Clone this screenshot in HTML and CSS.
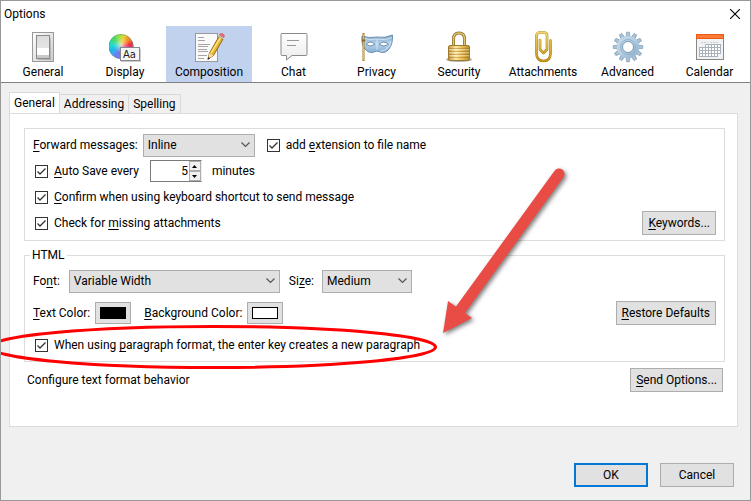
FILE: index.html
```html
<!DOCTYPE html>
<html lang="en">
<head>
    <meta charset="UTF-8">
    <meta name="viewport" content="width=device-width, initial-scale=1.0">
    <title>Options</title>
    <link rel="stylesheet" href="styles.css">
</head>
<body>
<div class="window">
    <header class="titlebar">
        <h1>Options</h1>
        <button class="close" aria-label="Close">
            <svg width="10" height="10" viewBox="0 0 10 10"><path d="M0 0L10 10M10 0L0 10" stroke="#000" stroke-width="1.1"/></svg>
        </button>
    </header>

    <nav class="toolbar">
        <button class="tool">
            <svg width="32" height="32" viewBox="0 0 32 32">
                <defs>
                    <linearGradient id="plate" x2="1" y2="1"><stop offset="0" stop-color="#fff"/><stop offset="1" stop-color="#ccc"/></linearGradient>
                    <linearGradient id="rocker" x2="0" y2="1"><stop offset="0" stop-color="#dcdcdc"/><stop offset="1" stop-color="#ececec"/></linearGradient>
                </defs>
                <rect x="5.5" y="1.5" width="21" height="29" fill="url(#plate)" stroke="#999"/>
                <path d="M10 28h13V6l1 2v21H11z" fill="#777" opacity=".35"/>
                <rect x="9.5" y="4.5" width="13" height="23" fill="url(#rocker)" stroke="#8a8a8a"/>
                <path d="M10 17h12v7H10z" fill="#fff"/>
                <path d="M10 24h12v3H10z" fill="#c8c8c8"/>
            </svg>
            <span>General</span>
        </button>
        <button class="tool">
            <svg width="32" height="32" viewBox="0 0 32 32">
                <defs>
                    <clipPath id="disc"><circle cx="12" cy="15.5" r="12.5"/></clipPath>
                    <filter id="blend" x="-30%" y="-30%" width="160%" height="160%"><feGaussianBlur stdDeviation="1.8"/></filter>
                    <radialGradient id="shine"><stop offset="0" stop-color="#fff" stop-opacity=".5"/><stop offset="1" stop-color="#fff" stop-opacity="0"/></radialGradient>
                </defs>
                <g clip-path="url(#disc)">
                    <g filter="url(#blend)">
                        <path d="M12 15L12-8L34-4z" fill="#f2d034"/>
                        <path d="M12 15L24-5L40 8z" fill="#fb8a25"/>
                        <path d="M12 15L38 2L40 22z" fill="#ef2e37"/>
                        <path d="M12 15L40 18L28 40z" fill="#e5359f"/>
                        <path d="M12 15L28 40L6 40z" fill="#b34fdf"/>
                        <path d="M12 15L10 40L-12 30z" fill="#6a7cf2"/>
                        <path d="M12 15L-8 36L-12 12z" fill="#23b4ed"/>
                        <path d="M12 15L-12 20L-8 2z" fill="#1edbd0"/>
                        <path d="M12 15L-12 5L4-8z" fill="#45d96a"/>
                        <path d="M12 15L1-8L15-8z" fill="#a5df3c"/>
                    </g>
                    <circle cx="12" cy="14" r="8" fill="url(#shine)"/>
                </g>
                <circle cx="12" cy="15.5" r="12" fill="none" stroke="#4a9c8c" stroke-opacity=".5"/>
                <path d="M12 30.5h19.500V18" fill="none" stroke="#000" stroke-opacity=".2"/>
                <rect x="11.5" y="16.5" width="19" height="13" fill="#f6f6f6" stroke="#888"/>
                <text class="icon-text" x="14" y="27">Aa</text>
            </svg>
            <span>Display</span>
        </button>
        <button class="tool active">
            <svg width="32" height="32" viewBox="0 0 32 32">
                <rect x="2.5" y="2.5" width="22" height="28" fill="#fafafa" stroke="#999"/>
                <path d="M5 6.500h6M5 9.500h7M5 13.500h12M5 15.500h10M5 18.500h9M5 20.500h10M5 24.500h9M5 27.500h6" stroke="#a5a5a5"/>
                <path d="M15 28l1.500-6L26 5.500l4 2.500-9.500 16.500z" fill="#e8b52d" stroke="#94681c"/>
                <path d="M18 22L27.500 6.500" stroke="#ffe27a" stroke-width="1.5"/>
                <path d="M15 28l1.500-6 4 2.500z" fill="#f4d9a4"/>
                <path d="M14.500 29l.8-3 1.800 1.200z" fill="#222"/>
                <path d="M26 5.500l4 2.500.8-1.500-4-2.500z" fill="#c5ccd2"/>
                <path d="M26.500 4c1-3 6-1 4.500 2.500z" fill="#ed7475" stroke="#cb4a50" stroke-width=".7"/>
            </svg>
            <span>Composition</span>
        </button>
        <button class="tool">
            <svg width="32" height="32" viewBox="0 0 32 32">
                <defs><linearGradient id="bubble" x2="0" y2="1"><stop offset="0" stop-color="#fff"/><stop offset="1" stop-color="#ececec"/></linearGradient></defs>
                <path d="M4 2.500h24q1 0 1 1v20q0 1-1 1H14L8.500 29V24.500H4q-1 0-1-1v-20q0-1 1-1z" fill="url(#bubble)" stroke="#8a8a8a"/>
                <path d="M9 9.500h12M9 14.500h9" stroke="#999"/>
            </svg>
            <span>Chat</span>
        </button>
        <button class="tool">
            <svg width="32" height="32" viewBox="0 0 32 32">
                <defs><linearGradient id="mask" x2="0" y2="1"><stop offset="0" stop-color="#7ea3c4"/><stop offset=".5" stop-color="#b7d4ee"/><stop offset="1" stop-color="#86add2"/></linearGradient></defs>
                <path d="M1 5Q8 7.500 16 6Q24 7.500 31.500 4Q32 13 28 18Q24 23 19 21L16 20L13 21Q8 23 4 18Q0 13 1 5z" fill="url(#mask)" stroke="#6389ab" stroke-width=".9"/>
                <path d="M2 7Q9 10 16 8Q24 10 31 6.500M16 8v11M19 20Q27 21 30 10" fill="none" stroke="#dcecf9" stroke-width=".8"/>
                <path d="M5 13.500Q9 8.500 14 13.500Q9 16.500 5 13.500zM18 13.500Q23 8.500 27.500 13.500Q23 16.500 18 13.500z" fill="#fff" stroke="#5f82a2" stroke-width=".9"/>
                <path d="M2.500 2v28" stroke="#a87c22" stroke-width="2"/>
                <path d="M2.500 3v26" stroke="#e4b540"/>
                <path d="M1 9.500h3" stroke="#8c6619" stroke-width="2"/>
            </svg>
            <span>Privacy</span>
        </button>
        <button class="tool">
            <svg width="32" height="32" viewBox="0 0 32 32">
                <defs>
                    <linearGradient id="brass"><stop offset="0" stop-color="#c39a42"/><stop offset=".35" stop-color="#ffe9a0"/><stop offset=".7" stop-color="#e3b84d"/><stop offset="1" stop-color="#b38a32"/></linearGradient>
                </defs>
                <ellipse cx="16" cy="28.5" rx="13" ry="2.5" fill="#000" opacity=".3"/>
                <path d="M10.500 15V8Q10.500 2 16 2T21.500 8V15" fill="none" stroke="#8c6c2b" stroke-width="3"/>
                <path d="M10.500 15V8Q10.500 2 16 2T21.500 8V15" fill="none" stroke="#e0c672" stroke-width="1.5"/>
                <rect x="5.5" y="14.5" width="21" height="15" rx="1.5" fill="url(#brass)" stroke="#a07a2c"/>
                <path d="M6 17.500h20M6 20.500h20M6 23.500h20M6 26.500h20" stroke="#8b651a" stroke-opacity=".4"/>
                <path d="M6 18.500h20M6 21.500h20M6 24.500h20" stroke="#fff" stroke-opacity=".35"/>
            </svg>
            <span>Security</span>
        </button>
        <button class="tool">
            <svg width="32" height="32" viewBox="0 0 32 32">
                <defs><linearGradient id="clip" x2="0" y2="1"><stop offset="0" stop-color="#f0d56c"/><stop offset=".5" stop-color="#dcb63d"/><stop offset="1" stop-color="#c4921f"/></linearGradient></defs>
                <g fill="none" stroke-linejoin="round" stroke-linecap="round">
                    <path d="M13 9V18.500L16.500 22L20 18.500V4.500q0-3-3-3h-4q-3.500 0-3.500 3.500V22q0 8 7 8t7-8V9.500" stroke="#a17c24" stroke-width="2.6"/>
                    <path d="M13 9V18.500L16.500 22L20 18.500V4.500q0-3-3-3h-4q-3.500 0-3.500 3.500V22q0 8 7 8t7-8V9.500" stroke="url(#clip)" stroke-width="1.8"/>
                </g>
            </svg>
            <span>Attachments</span>
        </button>
        <button class="tool">
            <svg width="32" height="32" viewBox="0 0 32 32">
                <defs><linearGradient id="gear" x2="1" y2="1"><stop offset="0" stop-color="#c9dcea"/><stop offset=".5" stop-color="#b4cee2"/><stop offset="1" stop-color="#8aacc6"/></linearGradient></defs>
                <g fill="#a9c4d9" stroke="#7c9bb3" stroke-width=".7">
                    <path id="tooth" d="M14 6l.6-4.800h2.800l.6 4.800v20l-.6 4.800h-2.800l-.6-4.800z"/>
                    <use href="#tooth" transform="rotate(30 16 16)"/>
                    <use href="#tooth" transform="rotate(60 16 16)"/>
                    <use href="#tooth" transform="rotate(90 16 16)"/>
                    <use href="#tooth" transform="rotate(120 16 16)"/>
                    <use href="#tooth" transform="rotate(150 16 16)"/>
                </g>
                <circle cx="16" cy="16" r="11" fill="url(#gear)"/>
                <circle cx="16" cy="16" r="7.5" fill="none" stroke="#93b1c9"/>
                <circle cx="16" cy="16" r="5.5" fill="#fff" stroke="#7898b1"/>
            </svg>
            <span>Advanced</span>
        </button>
        <button class="tool">
            <svg width="32" height="32" viewBox="0 0 32 32">
                <rect x="2.5" y="3.5" width="27" height="25" fill="#f1f2f3" stroke="#888"/>
                <path d="M2 3h28v5H2z" fill="#e95b16"/>
                <path d="M3 4h26v3H3z" fill="#ff7a35"/>
                <path d="M7 11.500h7M16 11.500h8" stroke="#ccc" stroke-dasharray="2 1"/>
                <path d="M11 13h16v10h-3v3H5V16h6z" fill="#a9b2bc"/>
                <path d="M12 14h2v2h-2zm3 0h2v2h-2zm3 0h2v2h-2zm3 0h2v2h-2zm3 0h2v2h-2zM6 17h2v2H6zm3 0h2v2H9zm3 0h2v2h-2zm3 0h2v2h-2zm3 0h2v2h-2zm3 0h2v2h-2zm3 0h2v2h-2zM6 20h2v2H6zm3 0h2v2H9zm3 0h2v2h-2zm3 0h2v2h-2zm3 0h2v2h-2zm3 0h2v2h-2zm3 0h2v2h-2zM6 23h2v2H6zm3 0h2v2H9zm3 0h2v2h-2zm3 0h2v2h-2zm3 0h2v2h-2zm3 0h2v2h-2z" fill="#fff"/>
            </svg>
            <span>Calendar</span>
        </button>
    </nav>

    <main class="content">
        <div class="tabs" role="tablist">
            <button class="tab selected" role="tab" aria-selected="true">General</button>
            <button class="tab" role="tab">Addressing</button>
            <button class="tab" role="tab">Spelling</button>
        </div>

        <div class="panel" role="tabpanel">
            <fieldset class="group messages">
                <div class="row">
                    <label for="forward"><u>F</u>orward messages:</label>
                    <select id="forward" class="select-forward">
                        <option>Inline</option>
                        <option>As Attachment</option>
                    </select>
                    <label class="check extension"><input type="checkbox" checked><span>add <u>e</u>xtension to file name</span></label>
                </div>
                <div class="row">
                    <label class="check"><input type="checkbox" checked><span><u>A</u>uto Save every</span></label>
                    <div class="spinner">
                        <input type="number" id="minutes" value="5" min="1">
                        <div class="arrows">
                            <button aria-label="Increase"><svg width="5" height="3" viewBox="0 0 5 3"><path d="M0 3L2.500 0L5 3z"/></svg></button>
                            <button aria-label="Decrease"><svg width="5" height="3" viewBox="0 0 5 3"><path d="M0 0L2.500 3L5 0z"/></svg></button>
                        </div>
                    </div>
                    <label for="minutes">minutes</label>
                </div>
                <div class="row">
                    <label class="check"><input type="checkbox" checked><span><u>C</u>onfirm when using keyboard shortcut to send message</span></label>
                </div>
                <div class="row">
                    <label class="check"><input type="checkbox" checked><span>Check for <u>m</u>issing attachments</span></label>
                    <button class="btn push"><u>K</u>eywords...</button>
                </div>
            </fieldset>

            <fieldset class="group html">
                <legend>HTML</legend>
                <div class="row">
                    <label for="font">Fo<u>n</u>t:</label>
                    <select id="font" class="select-font">
                        <option>Variable Width</option>
                        <option>Fixed Width</option>
                    </select>
                    <label for="size">Si<u>z</u>e:</label>
                    <select id="size" class="select-size">
                        <option>Small</option>
                        <option selected>Medium</option>
                        <option>Large</option>
                    </select>
                </div>
                <div class="row">
                    <label for="text-color"><u>T</u>ext Color:</label>
                    <input type="color" id="text-color" value="#000000">
                    <label for="back-color"><u>B</u>ackground Color:</label>
                    <input type="color" id="back-color" value="#ffffff">
                    <button class="btn push"><u>R</u>estore Defaults</button>
                </div>
                <div class="row">
                    <label class="check"><input type="checkbox" checked><span>When using <u>p</u>aragraph format, the enter key creates a new paragraph</span></label>
                </div>
            </fieldset>

            <div class="row configure">
                <span>Configure text format behavior</span>
                <button class="btn push"><u>S</u>end Options...</button>
            </div>
        </div>
    </main>

    <footer class="actions">
        <button class="btn default">OK</button>
        <button class="btn">Cancel</button>
    </footer>

    <!-- Callouts drawn over the dialog -->
    <svg class="callouts" width="751" height="501" viewBox="0 0 751 501" aria-hidden="true">
        <ellipse cx="213" cy="347" rx="222.5" ry="20.5" fill="none" stroke="#f00" stroke-width="3"/>
        <g class="arrow" fill="#e94b45">
            <path d="M461 309L559 174" stroke="#e94b45" stroke-width="11" stroke-linecap="round"/>
            <path d="M443 333L448 301L472 318z"/>
        </g>
    </svg>
</div>
</body>
</html>
```
FILE: styles.css
```css
* {
    box-sizing: border-box;
}
body {
    margin: 0;
    font-family: Roboto, "Open Sans", sans-serif;
    font-size: 12px;
    line-height: 16px;
    color: #000;
}
button, input, select {
    font: inherit;
    color: inherit;
    margin: 0;
}
u {
    text-underline-offset: 2px;
    text-decoration-skip-ink: none;
}
.window {
    position: relative;
    display: flex;
    flex-direction: column;
    min-height: 100vh;
    overflow: hidden;
    background-color: #f0f0f0;
    border: 1px solid #999;
}

/* Title bar */
.titlebar {
    display: flex;
    justify-content: space-between;
    align-items: center;
    height: 25px;
    padding: 0 10px 0 3px;
    background-color: #fff;
}
.titlebar h1 {
    margin: 0;
    font-size: 12px;
    font-weight: normal;
}
.close {
    display: flex;
    padding: 0;
    border: 0;
    background: none;
}

/* Category toolbar */
.toolbar {
    display: grid;
    grid-template-columns: 82fr 82fr 86fr 83fr 83fr 82fr 86fr 83fr 81fr;
    height: 56px;
    padding-left: 1px;
    background-color: #fff;
    box-shadow: 0 1px #808080;
}
.tool {
    display: flex;
    flex-direction: column;
    align-items: center;
    gap: 1px;
    min-width: 0;
    padding: 5px 0 0;
    border: 0;
    background: none;
}
.tool.active {
    background-color: #c1d2ee;
}
.tool svg {
    flex: none;
}
.icon-text {
    font-family: "DejaVu Sans", sans-serif;
    font-size: 10px;
    fill: #222;
}

/* Tabs */
.content {
    padding: 10px 12px 0 8px;
}
.tabs {
    display: flex;
    align-items: flex-end;
    height: 21px;
}
.tab {
    height: 19px;
    padding: 0 4px;
    border: 1px solid #d9d9d9;
    border-left: 0;
    border-bottom: 0;
    background-color: #f0f0f0;
}
.tab.selected {
    height: 21px;
    border-left: 1px solid #d9d9d9;
    background-color: #fff;
}
.panel {
    padding: 14px 12px 28px 14px;
    background-color: #fff;
    border: 1px solid #dcdcdc;
}

/* Groups */
.group {
    min-width: 0;
    margin: 0;
    padding: 0 8px;
    border: 1px solid #dcdcdc;
}
.row {
    display: flex;
    align-items: center;
    height: 26px;
}
.push {
    margin-left: auto;
}
.messages {
    padding-top: 3px;
    padding-bottom: 4px;
    margin-bottom: 6px;
}
.html {
    padding-top: 2px;
}
.html legend {
    margin-left: -3px;
    padding: 0 2px;
}
.html .row {
    height: 32px;
}
.check {
    display: flex;
    align-items: center;
    gap: 6px;
    padding-left: 2px;
}
.check input {
    appearance: none;
    width: 13px;
    height: 13px;
    border: 1px solid #333;
    background-color: #fff;
}
.check input:checked {
    background-image: url("data:image/svg+xml,%3Csvg xmlns='http://www.w3.org/2000/svg' viewBox='0 0 11 11'%3E%3Cpath d='M1.500 5.500L4 8L9.500 2.500' fill='none' stroke='%23333' stroke-width='1.300'/%3E%3C/svg%3E");
}
.extension {
    margin-left: 10px;
}
select {
    appearance: none;
    height: 23px;
    padding: 0 20px 0 4px;
    border: 1px solid #adadad;
    border-radius: 0;
    background: #e1e1e1 url("data:image/svg+xml,%3Csvg xmlns='http://www.w3.org/2000/svg' width='9' height='6' viewBox='0 0 9 6'%3E%3Cpath d='M.5 .5L4.500 4.500L8.500 .5' fill='none' stroke='%23555' stroke-width='1.200'/%3E%3C/svg%3E") no-repeat right 4px center;
}
.select-forward {
    width: 112px;
    margin-left: 5px;
}
.select-font {
    width: 211px;
    margin: 0 9px;
}
.select-size {
    width: 90px;
    margin-left: 8px;
}
.spinner {
    display: flex;
    width: 52px;
    height: 22px;
    margin: 0 10px 0 11px;
    border: 1px solid #7a7a7a;
    border-right-color: #eee;
}
.spinner input {
    appearance: textfield;
    flex: 1;
    min-width: 0;
    padding: 0 1px;
    border: 0;
    text-align: right;
}
.spinner input::-webkit-inner-spin-button {
    display: none;
}
.arrows {
    display: flex;
    flex-direction: column;
    width: 12px;
}
.arrows button {
    display: flex;
    flex: 1;
    align-items: center;
    justify-content: center;
    padding: 0;
    border: 1px solid #adadad;
    background-color: #f0f0f0;
}
input[type="color"] {
    width: 36px;
    height: 22px;
    margin: 0 13px 0 5px;
    padding: 4px;
    border: 1px solid #adadad;
    background-color: #e1e1e1;
}
input[type="color"]::-webkit-color-swatch-wrapper {
    padding: 0;
}
input[type="color"]::-webkit-color-swatch {
    border: 1px solid #000;
    border-radius: 0;
}
.btn {
    height: 24px;
    padding: 0 5px;
    border: 1px solid #adadad;
    background-color: #e1e1e1;
}
.configure {
    height: 36px;
    padding: 0 2px 0 3px;
}

/* Dialog buttons */
.actions {
    display: flex;
    justify-content: flex-end;
    gap: 12px;
    margin-top: auto;
    padding: 0 16px 13px;
}
.actions .btn {
    width: 74px;
}
.actions .default {
    border: 2px solid #0078d7;
}

/* Callouts */
.callouts {
    position: absolute;
    top: -1px;
    left: -1px;
    pointer-events: none;
}
.arrow {
    filter: drop-shadow(2px 2px 2px rgba(0, 0, 0, 0.5));
}
```
